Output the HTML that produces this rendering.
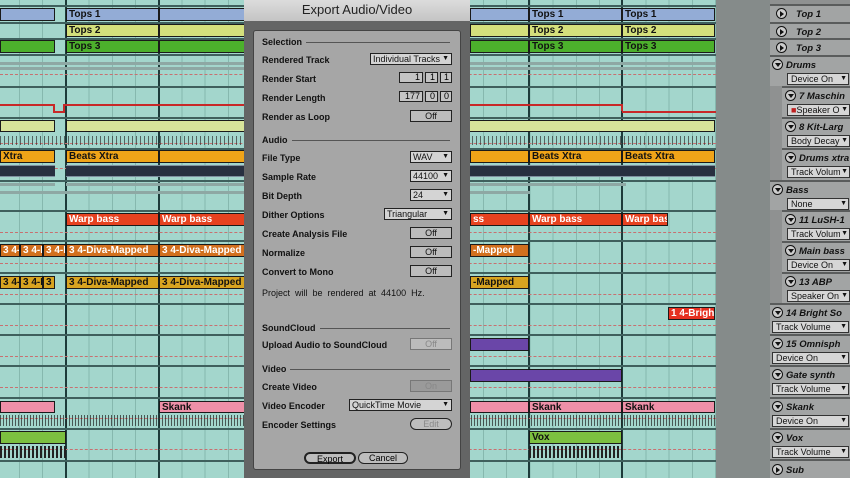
<!DOCTYPE html>
<html><head><meta charset="utf-8"><style>
*{margin:0;padding:0;box-sizing:border-box}
body{width:850px;height:478px;overflow:hidden;position:relative;background:#a3d6cc;font-family:"Liberation Sans",sans-serif}
#arr{position:absolute;left:0;top:0;width:720px;height:478px;
background:
linear-gradient(90deg,transparent 65px,#1d3b3a 65px,#1d3b3a 67px,transparent 67px),
linear-gradient(90deg,transparent 158px,#1d3b3a 158px,#1d3b3a 160px,transparent 160px),
linear-gradient(90deg,transparent 528px,#1d3b3a 528px,#1d3b3a 530px,transparent 530px),
linear-gradient(90deg,transparent 621px,#1d3b3a 621px,#1d3b3a 623px,transparent 623px),
repeating-linear-gradient(90deg,transparent 0 19px,#86b8ae 19px 20px,transparent 20px 23.2px),
#a3d6cc}
.h{position:absolute;left:0;width:716px;height:2px;background:#3f605d}
.c{position:absolute;border:1px solid #1a1a1a;font-size:10px;font-weight:bold;color:#111;padding-left:2px;line-height:11px;white-space:nowrap;overflow:hidden}
.w{color:#fff}
.dash{position:absolute;left:0;width:716px;border-top:1px dashed #c87070}
.wv{position:absolute;height:10px;background:repeating-linear-gradient(90deg,#333 0 1px,transparent 1px 4px);opacity:.7}
.wd{position:absolute;height:12px;background:#283040;border-top:1px solid #8090a0;border-bottom:1px solid #8090a0}
#gcol{position:absolute;left:716px;top:0;width:54px;height:478px;background:#858b8a}
#rp{position:absolute;left:770px;top:0;width:80px;height:478px;background:#8f9191}
.tr{position:absolute;left:0;width:80px;border-top:2px solid #5a5c5c;background:#a2a4a4;font-size:9.5px;font-weight:bold;font-style:italic;color:#111}
.tr .ic{position:absolute;width:11px;height:11px;border-radius:50%;border:1px solid #111;background:#ccc}
.tr .ic:after{content:"";position:absolute;left:2px;top:3px;border-left:3px solid transparent;border-right:3px solid transparent;border-top:4px solid #111}
.tr .ic.p:after{left:3px;top:2px;border-top:3px solid transparent;border-bottom:3px solid transparent;border-left:4px solid #111;border-right:0}
.dd{position:absolute;height:12px;background:#d6d6d6;border:1px solid #333;font-size:9px;font-weight:normal;font-style:normal;padding-left:3px;line-height:10px;white-space:nowrap;overflow:hidden}
.dd:after{content:"▼";position:absolute;right:1px;top:0;font-size:7px;background:#d6d6d6;padding-left:1px}
#dlg{position:absolute;left:244px;top:0;width:226px;height:478px;background:#646565}
#tt{position:absolute;left:0;top:0;width:226px;height:21px;background:linear-gradient(#dcdcdc,#c4c4c4);font-size:13px;color:#222;text-align:center;line-height:20px}
#in{position:absolute;left:9px;top:30px;width:208px;height:440px;background:#a6a6a6;border:1px solid #444;border-radius:3px}
.l{position:absolute;left:8px;font-size:9px;font-weight:bold;color:#111}
.sec{position:absolute;left:8px;right:10px;font-size:9px;font-weight:bold;color:#111;display:flex;align-items:center}
.sec:after{content:"";flex:1;height:1px;background:#555;margin-left:4px}
.b{position:absolute;height:12px;background:#bcbcbc;border:1px solid #222;font-size:9px;text-align:center;line-height:10px;color:#111}
.s{position:absolute;height:12px;background:#d4d4d4;border:1px solid #222;font-size:9px;padding-left:2px;line-height:10px;color:#111}
.s:after{content:"▼";position:absolute;right:2px;top:0;font-size:7px}
.n{position:absolute;height:11px;background:#c4c4c4;border:1px solid #222;font-size:9px;text-align:right;padding-right:2px;line-height:9px}
.dis{color:#888;border-color:#777}
.pb{position:absolute;height:12px;border:1px solid #222;border-radius:6px;background:#bdbdbd;font-size:9px;text-align:center;line-height:10px}
</style></head><body>
<div id="arr">
<div class="h" style="top:5px"></div><div class="h" style="top:22px"></div><div class="h" style="top:38px"></div><div class="h" style="top:54px"></div>
<div class="h" style="top:86px"></div><div class="h" style="top:117px"></div><div class="h" style="top:148px"></div><div class="h" style="top:180px"></div>
<div class="h" style="top:210px"></div><div class="h" style="top:240px"></div><div class="h" style="top:272px"></div><div class="h" style="top:303px"></div>
<div class="h" style="top:334px"></div><div class="h" style="top:365px"></div><div class="h" style="top:397px"></div><div class="h" style="top:428px"></div><div class="h" style="top:460px"></div>
<div style="position:absolute;left:0;top:62px;width:716px;height:3px;background:#8ea8a4"></div>
<div style="position:absolute;left:0;top:67px;width:716px;height:3px;background:#8ea8a4"></div>
<div class="dash" style="top:74px"></div><div class="dash" style="top:143px"></div><div class="dash" style="top:168px"></div>
<div class="dash" style="top:232px"></div><div class="dash" style="top:263px"></div><div class="dash" style="top:294px"></div>
<div class="dash" style="top:325px"></div><div class="dash" style="top:356px"></div><div class="dash" style="top:387px"></div><div class="dash" style="top:418px"></div><div class="dash" style="top:449px"></div>
<div style="position:absolute;left:0;top:104px;width:53px;height:2px;background:#c82828"></div>
<div style="position:absolute;left:53px;top:104px;width:2px;height:9px;background:#c82828"></div>
<div style="position:absolute;left:53px;top:111px;width:10px;height:2px;background:#c82828"></div>
<div style="position:absolute;left:63px;top:104px;width:2px;height:9px;background:#c82828"></div>
<div style="position:absolute;left:65px;top:104px;width:557px;height:2px;background:#c82828"></div>
<div style="position:absolute;left:621px;top:104px;width:2px;height:7px;background:#c82828"></div>
<div style="position:absolute;left:622px;top:111px;width:98px;height:2px;background:#c82828"></div>
<div class="c" style="left:0;top:8px;width:55px;height:13px;background:#93acd6"></div>
<div class="c" style="left:66px;top:8px;width:93px;height:13px;background:#93acd6">Tops 1</div>
<div class="c" style="left:159px;top:8px;width:90px;height:13px;background:#93acd6"></div>
<div class="c" style="left:470px;top:8px;width:59px;height:13px;background:#93acd6"></div>
<div class="c" style="left:529px;top:8px;width:93px;height:13px;background:#93acd6">Tops 1</div>
<div class="c" style="left:622px;top:8px;width:93px;height:13px;background:#93acd6">Tops 1</div>
<div class="c" style="left:66px;top:24px;width:93px;height:13px;background:#d4e07c">Tops 2</div>
<div class="c" style="left:159px;top:24px;width:90px;height:13px;background:#d4e07c"></div>
<div class="c" style="left:470px;top:24px;width:59px;height:13px;background:#d4e07c"></div>
<div class="c" style="left:529px;top:24px;width:93px;height:13px;background:#d4e07c">Tops 2</div>
<div class="c" style="left:622px;top:24px;width:93px;height:13px;background:#d4e07c">Tops 2</div>
<div class="c" style="left:0;top:40px;width:55px;height:13px;background:#4cb02c"></div>
<div class="c" style="left:66px;top:40px;width:93px;height:13px;background:#4cb02c">Tops 3</div>
<div class="c" style="left:159px;top:40px;width:90px;height:13px;background:#4cb02c"></div>
<div class="c" style="left:470px;top:40px;width:59px;height:13px;background:#4cb02c"></div>
<div class="c" style="left:529px;top:40px;width:93px;height:13px;background:#4cb02c">Tops 3</div>
<div class="c" style="left:622px;top:40px;width:93px;height:13px;background:#4cb02c">Tops 3</div>
<div class="c" style="left:0;top:120px;width:55px;height:12px;background:#d8e49a"></div>
<div class="c" style="left:66px;top:120px;width:649px;height:12px;background:#d8e49a"></div>
<div class="wv" style="left:0;top:136px;width:715px;height:9px"></div>
<div class="c" style="left:0;top:150px;width:55px;height:13px;background:#f0a418">Xtra</div>
<div class="c" style="left:66px;top:150px;width:93px;height:13px;background:#f0a418">Beats Xtra</div>
<div class="c" style="left:159px;top:150px;width:90px;height:13px;background:#f0a418"></div>
<div class="c" style="left:470px;top:150px;width:59px;height:13px;background:#f0a418"></div>
<div class="c" style="left:529px;top:150px;width:93px;height:13px;background:#f0a418">Beats Xtra</div>
<div class="c" style="left:622px;top:150px;width:93px;height:13px;background:#f0a418">Beats Xtra</div>
<div class="wd" style="left:0;top:165px;width:55px"></div><div class="wd" style="left:66px;top:165px;width:649px"></div>
<div style="position:absolute;left:0;top:183px;width:55px;height:3px;background:#8ea8a4"></div>
<div style="position:absolute;left:66px;top:183px;width:560px;height:3px;background:#8ea8a4"></div>
<div style="position:absolute;left:0;top:191px;width:530px;height:3px;background:#8ea8a4"></div>
<div class="c w" style="left:66px;top:213px;width:93px;height:13px;background:#e64220">Warp bass</div>
<div class="c w" style="left:159px;top:213px;width:90px;height:13px;background:#e64220">Warp bass</div>
<div class="c w" style="left:470px;top:213px;width:59px;height:13px;background:#e64220">ss</div>
<div class="c w" style="left:529px;top:213px;width:93px;height:13px;background:#e64220">Warp bass</div>
<div class="c w" style="left:622px;top:213px;width:46px;height:13px;background:#e64220">Warp bass</div>
<div class="c w" style="left:0;top:244px;width:20px;height:13px;background:#d2701e">3 4-D</div>
<div class="c w" style="left:20px;top:244px;width:23px;height:13px;background:#d2701e">3 4-D</div>
<div class="c w" style="left:43px;top:244px;width:23px;height:13px;background:#d2701e">3 4-D</div>
<div class="c w" style="left:66px;top:244px;width:93px;height:13px;background:#d2701e">3 4-Diva-Mapped</div>
<div class="c w" style="left:159px;top:244px;width:90px;height:13px;background:#d2701e">3 4-Diva-Mapped</div>
<div class="c w" style="left:470px;top:244px;width:59px;height:13px;background:#d2701e">-Mapped</div>
<div class="c" style="left:0;top:276px;width:20px;height:13px;background:#d8a420">3 4-D</div>
<div class="c" style="left:20px;top:276px;width:23px;height:13px;background:#d8a420">3 4-D</div>
<div class="c" style="left:43px;top:276px;width:12px;height:13px;background:#d8a420">3 4</div>
<div class="c" style="left:66px;top:276px;width:93px;height:13px;background:#d8a420">3 4-Diva-Mapped</div>
<div class="c" style="left:159px;top:276px;width:90px;height:13px;background:#d8a420">3 4-Diva-Mapped</div>
<div class="c" style="left:470px;top:276px;width:59px;height:13px;background:#d8a420">-Mapped</div>
<div class="c w" style="left:668px;top:307px;width:47px;height:13px;background:#e63020">1 4-Bright S</div>
<div class="c" style="left:470px;top:338px;width:59px;height:13px;background:#6a46a8"></div>
<div class="c" style="left:470px;top:369px;width:152px;height:13px;background:#6a46a8"></div>
<div class="c" style="left:0;top:401px;width:55px;height:12px;background:#ee90a8"></div>
<div class="c" style="left:159px;top:401px;width:90px;height:12px;background:#ee90a8">Skank</div>
<div class="c" style="left:470px;top:401px;width:59px;height:12px;background:#ee90a8"></div>
<div class="c" style="left:529px;top:401px;width:93px;height:12px;background:#ee90a8">Skank</div>
<div class="c" style="left:622px;top:401px;width:93px;height:12px;background:#ee90a8">Skank</div>
<div class="wv" style="left:0;top:415px;width:715px;height:11px;background:repeating-linear-gradient(90deg,#222 0 1px,transparent 1px 3px)"></div>
<div class="c" style="left:0;top:431px;width:66px;height:13px;background:#7cc040"></div>
<div class="c" style="left:529px;top:431px;width:93px;height:13px;background:#7cc040">Vox</div>
<div class="wv" style="left:0;top:446px;width:66px;height:12px;opacity:1;background:repeating-linear-gradient(90deg,#222 0 2px,transparent 2px 4px)"></div>
<div class="wv" style="left:529px;top:446px;width:93px;height:12px;opacity:1;background:repeating-linear-gradient(90deg,#222 0 2px,transparent 2px 4px)"></div>
</div>
<div id="gcol"></div>
<div id="rp">
<div class="tr" style="top:4px;height:18px"><div class="ic p" style="left:6px;top:2px"></div><span style="position:absolute;left:26px;top:3px">Top 1</span></div>
<div class="tr" style="top:22px;height:16px"><div class="ic p" style="left:6px;top:2px"></div><span style="position:absolute;left:26px;top:3px">Top 2</span></div>
<div class="tr" style="top:38px;height:17px"><div class="ic p" style="left:6px;top:2px"></div><span style="position:absolute;left:26px;top:3px">Top 3</span></div>
<div class="tr" style="top:55px;height:31px"><div class="ic" style="left:2px;top:2px"></div><span style="position:absolute;left:16px;top:3px">Drums</span><div class="dd" style="left:17px;top:16px;width:62px">Device On</div></div>
<div class="tr" style="top:86px;height:31px;left:12px;width:68px"><div class="ic" style="left:3px;top:2px"></div><span style="position:absolute;left:17px;top:3px">7 Maschin</span><div class="dd" style="left:5px;top:16px;width:63px"><span style="color:#c02020">■</span>Speaker On</div></div>
<div class="tr" style="top:117px;height:31px;left:12px;width:68px"><div class="ic" style="left:3px;top:2px"></div><span style="position:absolute;left:17px;top:3px">8 Kit-Larg</span><div class="dd" style="left:5px;top:16px;width:63px">Body Decay</div></div>
<div class="tr" style="top:148px;height:32px;left:12px;width:68px"><div class="ic" style="left:3px;top:2px"></div><span style="position:absolute;left:17px;top:3px">Drums xtra</span><div class="dd" style="left:5px;top:16px;width:63px">Track Volume</div></div>
<div class="tr" style="top:180px;height:30px"><div class="ic" style="left:2px;top:2px"></div><span style="position:absolute;left:16px;top:3px">Bass</span><div class="dd" style="left:17px;top:16px;width:62px">None</div></div>
<div class="tr" style="top:210px;height:31px;left:12px;width:68px"><div class="ic" style="left:3px;top:2px"></div><span style="position:absolute;left:17px;top:3px">11 LuSH-1</span><div class="dd" style="left:5px;top:16px;width:63px">Track Volume</div></div>
<div class="tr" style="top:241px;height:31px;left:12px;width:68px"><div class="ic" style="left:3px;top:2px"></div><span style="position:absolute;left:17px;top:3px">Main bass</span><div class="dd" style="left:5px;top:16px;width:63px">Device On</div></div>
<div class="tr" style="top:272px;height:31px;left:12px;width:68px"><div class="ic" style="left:3px;top:2px"></div><span style="position:absolute;left:17px;top:3px">13 ABP</span><div class="dd" style="left:5px;top:16px;width:63px">Speaker On</div></div>
<div class="tr" style="top:303px;height:31px"><div class="ic" style="left:2px;top:2px"></div><span style="position:absolute;left:16px;top:3px">14 Bright So</span><div class="dd" style="left:2px;top:16px;width:77px">Track Volume</div></div>
<div class="tr" style="top:334px;height:31px"><div class="ic" style="left:2px;top:2px"></div><span style="position:absolute;left:16px;top:3px">15 Omnisph</span><div class="dd" style="left:2px;top:16px;width:77px">Device On</div></div>
<div class="tr" style="top:365px;height:32px"><div class="ic" style="left:2px;top:2px"></div><span style="position:absolute;left:16px;top:3px">Gate synth</span><div class="dd" style="left:2px;top:16px;width:77px">Track Volume</div></div>
<div class="tr" style="top:397px;height:31px"><div class="ic" style="left:2px;top:2px"></div><span style="position:absolute;left:16px;top:3px">Skank</span><div class="dd" style="left:2px;top:16px;width:77px">Device On</div></div>
<div class="tr" style="top:428px;height:31px"><div class="ic" style="left:2px;top:2px"></div><span style="position:absolute;left:16px;top:3px">Vox</span><div class="dd" style="left:2px;top:16px;width:77px">Track Volume</div></div>
<div class="tr" style="top:459px;height:19px"><div class="ic p" style="left:2px;top:3px"></div><span style="position:absolute;left:16px;top:4px">Sub</span></div>
</div>
<div id="dlg">
<div id="tt">Export Audio/Video</div>
<div id="in">
<div class="sec" style="top:6px">Selection</div>
<div class="l" style="top:24px">Rendered Track</div><div class="s" style="left:116px;top:22px;width:82px">Individual Tracks</div>
<div class="l" style="top:43px">Render Start</div><div class="n" style="left:145px;top:41px;width:24px">1</div><div class="n" style="left:171px;top:41px;width:13px">1</div><div class="n" style="left:186px;top:41px;width:12px">1</div>
<div class="l" style="top:62px">Render Length</div><div class="n" style="left:145px;top:60px;width:24px">177</div><div class="n" style="left:171px;top:60px;width:13px">0</div><div class="n" style="left:186px;top:60px;width:12px">0</div>
<div class="l" style="top:81px">Render as Loop</div><div class="b" style="left:156px;top:79px;width:42px">Off</div>
<div class="sec" style="top:104px">Audio</div>
<div class="l" style="top:122px">File Type</div><div class="s" style="left:156px;top:120px;width:42px">WAV</div>
<div class="l" style="top:141px">Sample Rate</div><div class="s" style="left:156px;top:139px;width:42px">44100</div>
<div class="l" style="top:160px">Bit Depth</div><div class="s" style="left:156px;top:158px;width:42px">24</div>
<div class="l" style="top:179px">Dither Options</div><div class="s" style="left:130px;top:177px;width:68px">Triangular</div>
<div class="l" style="top:198px">Create Analysis File</div><div class="b" style="left:156px;top:196px;width:42px">Off</div>
<div class="l" style="top:217px">Normalize</div><div class="b" style="left:156px;top:215px;width:42px">Off</div>
<div class="l" style="top:236px">Convert to Mono</div><div class="b" style="left:156px;top:234px;width:42px">Off</div>
<div class="l" style="top:257px;font-weight:normal">Project &nbsp;will &nbsp;be &nbsp;rendered &nbsp;at &nbsp;44100 &nbsp;Hz.</div>
<div class="sec" style="top:292px">SoundCloud</div>
<div class="l" style="top:309px">Upload Audio to SoundCloud</div><div class="b dis" style="left:156px;top:307px;width:42px">Off</div>
<div class="sec" style="top:333px">Video</div>
<div class="l" style="top:351px">Create Video</div><div class="b dis" style="left:156px;top:349px;width:42px;background:#9a9a9a">On</div>
<div class="l" style="top:370px">Video Encoder</div><div class="s" style="left:95px;top:368px;width:103px">QuickTime Movie</div>
<div class="l" style="top:389px">Encoder Settings</div><div class="pb dis" style="left:156px;top:387px;width:42px">Edit</div>
<div class="pb" style="left:50px;top:421px;width:52px;border-width:2px">Export</div><div class="pb" style="left:104px;top:421px;width:50px">Cancel</div>
</div></div>
</body></html>
